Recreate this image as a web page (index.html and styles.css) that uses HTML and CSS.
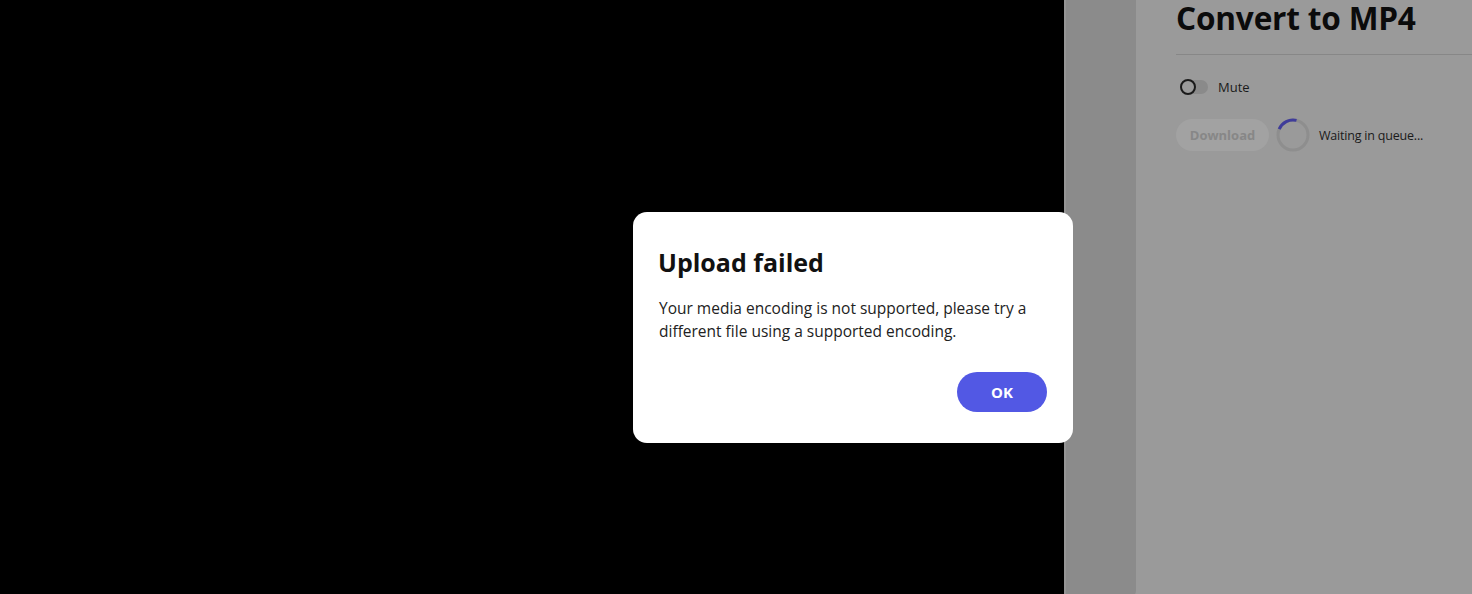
FILE: index.html
```html
<!DOCTYPE html>
<html lang="en">
<head>
<meta charset="utf-8">
<title>Convert to MP4</title>
<link rel="stylesheet" href="styles.css">
</head>
<body>
<div class="page">
  <div class="stage"></div>
  <div class="rail"></div>
  <div class="side">
    <h1 class="title">Convert to MP4</h1>
    <div class="divider"></div>
    <div class="mute-row">
      <span class="toggle"><span class="knob"></span></span>
      <span class="label">Mute</span>
    </div>
    <div class="dl-row">
      <button class="download">Download</button>
      <svg class="spinner" width="34" height="34" viewBox="0 0 34 34">
        <circle cx="17" cy="17" r="15" fill="none" stroke="#8e8e8e" stroke-width="3"/>
        <path d="M3.2 11.2 A15 15 0 0 1 20.5 2.4" fill="none" stroke="#3f3c9a" stroke-width="3"/>
      </svg>
      <span class="status">Waiting in queue...</span>
    </div>
  </div>
</div>
<div class="dialog">
  <h2 class="dlg-title">Upload failed</h2>
  <p class="dlg-text">Your media encoding is not supported, please try a different file using a supported encoding.</p>
  <div class="dlg-actions">
    <button class="ok">OK</button>
  </div>
</div>
</body>
</html>
```
FILE: styles.css
```css
* { box-sizing: border-box; }
html, body { margin: 0; padding: 0; }
body {
  width: 1472px;
  height: 594px;
  overflow: hidden;
  font-family: "Open Sans", "Noto Sans", sans-serif;
  background: #9a9a9a;
}
.page {
  display: flex;
  height: 594px;
}
.stage {
  width: 1064px;
  background: #000;
}
.rail {
  width: 72px;
  background: #8b8b8b;
  border-left: 2px solid #959595;
  border-bottom-right-radius: 10px;
  height: 600px;
}
.side {
  flex: 1;
  padding-left: 40px;
  background: #9a9a9a;
}
.title {
  margin: -4px 0 0 0;
  font-size: 31.6px;
  font-weight: 700;
  color: #0b0b0b;
  line-height: 44px;
  letter-spacing: -0.2px;
}
.divider {
  height: 1px;
  background: #878787;
  margin-top: 14px;
}
.mute-row {
  display: flex;
  align-items: center;
  margin-top: 24px;
  padding-left: 4px;
  height: 16px;
}
.toggle {
  position: relative;
  width: 28px;
  height: 14px;
  border-radius: 7px;
  background: #8a8a8a;
}
.knob {
  position: absolute;
  left: 0;
  top: -1px;
  width: 16px;
  height: 16px;
  border-radius: 50%;
  border: 2px solid #1a1a1a;
  background: #9a9a9a;
}
.label {
  margin-left: 10px;
  font-size: 13px;
  color: #1a1a1a;
}
.dl-row {
  display: flex;
  align-items: center;
  margin-top: 23px;
}
.download {
  width: 93px;
  height: 32px;
  border: none;
  border-radius: 16px;
  background: #a2a2a2;
  color: #878787;
  font-family: inherit;
  font-weight: 700;
  font-size: 13px;
  padding: 0;
}
.spinner {
  margin-left: 7px;
}
.status {
  margin-left: 9px;
  font-size: 12.5px;
  letter-spacing: -0.2px;
  color: #1a1a1a;
}
.dialog {
  position: absolute;
  left: 633px;
  top: 212px;
  width: 440px;
  height: 231px;
  background: #fff;
  border-radius: 14px;
  padding: 32px 26px 0 25px;
}
.dlg-title {
  margin: 0;
  font-size: 25px;
  font-weight: 700;
  color: #111;
  line-height: 36px;
}
.dlg-text {
  margin: 17px 0 0 1px;
  font-size: 15.5px;
  line-height: 23px;
  color: #222;
}
.dlg-actions {
  display: flex;
  justify-content: flex-end;
  margin-top: 29px;
}
.ok {
  width: 90px;
  height: 40px;
  border: none;
  border-radius: 20px;
  background: #5258e4;
  color: #fff;
  font-family: inherit;
  font-weight: 700;
  font-size: 15px;
  padding: 0;
}
```
